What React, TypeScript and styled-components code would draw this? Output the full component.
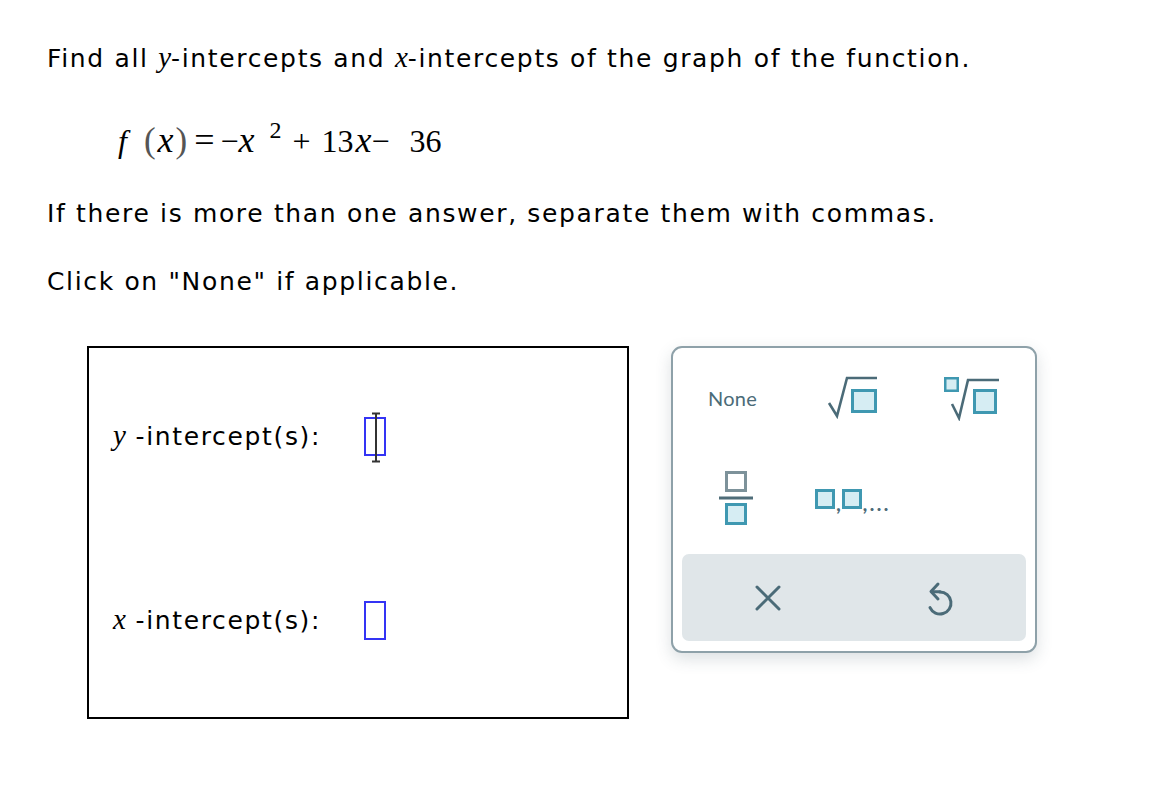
import React from "react";
import styled, { createGlobalStyle } from "styled-components";

const Global = createGlobalStyle`
  html, body { margin: 0; padding: 0; background: #fff; }
  body { font-family: "DejaVu Sans", Verdana, sans-serif; color: #000; }
`;

const Page = styled.div`
  padding: 43px 0 0 47px;
  width: 1166px;
  height: 792px;
  box-sizing: border-box;
`;

const Para = styled.p<{ $mt?: number }>`
  margin: ${(p) => p.$mt ?? 0}px 0 0 0;
  font-size: 25px;
  line-height: 28px;
  letter-spacing: 1.65px;
  white-space: nowrap;
`;

const Var = styled.span<{ $size?: number }>`
  font-family: "Liberation Serif", "Times New Roman", serif;
  font-style: italic;
  font-size: ${(p) => p.$size ?? 29}px;
  letter-spacing: 0;
`;

const MathLine = styled.div`
  margin: 47px 0 0 71px;
  height: 40px;
  display: flex;
  align-items: baseline;
  font-family: "Liberation Serif", "Times New Roman", serif;
  font-size: 32px;
  line-height: 40px;
`;

const Sym = styled.span<{ $ml?: number; $it?: boolean; $size?: number; $color?: string; $raise?: number }>`
  margin-left: ${(p) => p.$ml ?? 0}px;
  font-style: ${(p) => (p.$it ? "italic" : "normal")};
  font-size: ${(p) => p.$size ?? 32}px;
  color: ${(p) => p.$color ?? "#000"};
  position: relative;
  top: ${(p) => -(p.$raise ?? 0)}px;
`;

const AnswerArea = styled.div`
  margin: 50px 0 0 40px;
  display: flex;
  align-items: flex-start;
  gap: 42px;
`;

const AnswerBox = styled.div`
  width: 542px;
  height: 373px;
  box-sizing: border-box;
  border: 2px solid #000;
  padding: 68px 0 0 24px;
  display: grid;
  grid-template-columns: 251px auto;
  grid-template-rows: 40px 40px;
  row-gap: 144px;
  align-items: center;
  justify-items: start;
`;

const Label = styled.div`
  font-size: 25px;
  line-height: 28px;
  letter-spacing: 1.65px;
  white-space: nowrap;
`;

const InputSlot = styled.div`
  position: relative;
  width: 22px;
  height: 39px;
  box-sizing: border-box;
  border: 2px solid #3434f4;
`;

const Cursor = styled.svg`
  position: absolute;
  left: 3px;
  top: -7px;
`;

const Keypad = styled.div`
  width: 366px;
  height: 307px;
  box-sizing: border-box;
  border: 2px solid #8ea1a9;
  border-radius: 11px;
  box-shadow: 0 6px 16px rgba(60, 85, 95, 0.18);
  background: #fff;
  padding: 0 9px 10px 0;
  display: flex;
  flex-direction: column;
`;

const KeyGrid = styled.div`
  display: grid;
  grid-template-columns: repeat(3, 119px);
  grid-template-rows: 100px 100px;
`;

const Key = styled.div`
  display: flex;
  align-items: center;
  justify-content: center;
  color: #4b6b78;
`;

const NoneText = styled.span`
  font-family: Lato, "Open Sans", sans-serif;
  font-size: 20px;
  color: #4b6b78;
  letter-spacing: 0.2px;
`;

const ListIcon = styled.div`
  display: flex;
  align-items: flex-end;
  font-family: Lato, "Open Sans", sans-serif;
  font-weight: 900;
  font-size: 19px;
  line-height: 17px;
  color: #4b6b78;
  margin-left: 4px;
  margin-top: 2px;
`;

const Slot = styled.span`
  display: inline-block;
  width: 20px;
  height: 20px;
  box-sizing: border-box;
  border: 3px solid #3f98b1;
  background: #d6edf3;
`;

const Punct = styled.span<{ $spacing?: number }>`
  margin: 0 1px 0 1px;
  letter-spacing: ${(p) => p.$spacing ?? 0}px;
  position: relative;
  top: 3px;
`;

const ActionBar = styled.div`
  margin: 6px 0 0 9px;
  height: 87px;
  border-radius: 7px;
  background: #e0e6e9;
  display: grid;
  grid-template-columns: 1fr 1fr;
  align-items: center;
  justify-items: center;
`;

const STROKE = "#4b6b78";
const TEAL = "#3f98b1";
const FILL = "#d6edf3";

const SqrtIcon = () => (
  <svg width="53" height="44" viewBox="0 0 53 44" style={{ marginLeft: 2, marginTop: -2 }}>
    <path d="M3 28 L11 41 L21 3 H51" fill="none" stroke={STROKE} strokeWidth="2.6" strokeLinejoin="miter" />
    <rect x="26.5" y="15.5" width="23" height="21" fill={FILL} stroke={TEAL} strokeWidth="3" />
  </svg>
);

const NthRootIcon = () => (
  <svg width="60" height="46" viewBox="0 0 60 46" style={{ marginLeft: 2, marginTop: 0 }}>
    <rect x="3.25" y="3.25" width="12.5" height="12.5" fill={FILL} stroke={TEAL} strokeWidth="2.5" />
    <path d="M10 29 L17 43 L26 5 H57" fill="none" stroke={STROKE} strokeWidth="2.6" />
    <rect x="32.5" y="15.5" width="21" height="22" fill={FILL} stroke={TEAL} strokeWidth="3" />
  </svg>
);

const FracIcon = () => (
  <svg width="40" height="58" viewBox="0 0 40 58" style={{ marginLeft: 8 }}>
    <rect x="9.5" y="3.5" width="19" height="18" fill="#fff" stroke="#7d929a" strokeWidth="3" />
    <line x1="2" y1="29" x2="36" y2="29" stroke="#4f6d79" strokeWidth="3" />
    <rect x="9.5" y="35.5" width="19" height="19" fill={FILL} stroke={TEAL} strokeWidth="3" />
  </svg>
);

const CloseIcon = () => (
  <svg width="26" height="26" viewBox="0 0 26 26">
    <path d="M2 2 L24 24 M24 2 L2 24" stroke={STROKE} strokeWidth="3" strokeLinecap="round" />
  </svg>
);

const ResetIcon = () => (
  <svg width="32" height="38" viewBox="0 0 32 38" style={{ marginTop: 2 }}>
    <path
      d="M16 12 A11 11 0 1 1 6 27.6"
      fill="none"
      stroke={STROKE}
      strokeWidth="3"
      strokeLinecap="round"
    />
    <path d="M14 4 L7 11.5 L14 19" fill="none" stroke={STROKE} strokeWidth="3" strokeLinecap="round" strokeLinejoin="round" />
    <path d="M8 11.8 H16" stroke={STROKE} strokeWidth="3" strokeLinecap="round" />
  </svg>
);

export default function App() {
  return (
    <>
      <Global />
      <Page>
        <Para>
          Find all <Var>y</Var>-intercepts and <Var>x</Var>-intercepts of the graph of the function.
        </Para>
        <MathLine>
          <Sym $it>f</Sym>
          <Sym $ml={17} $size={35} $color="#555">(</Sym>
          <Sym $it $ml={2} $size={36}>x</Sym>
          <Sym $ml={2} $size={35} $color="#555">)</Sym>
          <Sym $ml={7} $size={36}>=</Sym>
          <Sym $ml={6}>−</Sym>
          <Sym $it $ml={0} $size={36}>x</Sym>
          <Sym $ml={15} $size={24} $raise={14}>2</Sym>
          <Sym $ml={11}>+</Sym>
          <Sym $ml={11}>13</Sym>
          <Sym $it $ml={2} $size={36}>x</Sym>
          <Sym $ml={0}>−</Sym>
          <Sym $ml={20}>36</Sym>
        </MathLine>
        <Para $mt={40}>If there is more than one answer, separate them with commas.</Para>
        <Para $mt={40}>Click on "None" if applicable.</Para>
        <AnswerArea>
          <AnswerBox>
            <Label>
              <Var>y</Var> -intercept(s):
            </Label>
            <InputSlot>
              <Cursor width="14" height="51" viewBox="0 0 14 51">
                <path d="M3 1.5 H11 M7 1.5 V49.5 M3 49.5 H11" stroke="#333" strokeWidth="2" fill="none" />
              </Cursor>
            </InputSlot>
            <Label>
              <Var>x</Var> -intercept(s):
            </Label>
            <InputSlot />
          </AnswerBox>
          <Keypad>
            <KeyGrid>
              <Key>
                <NoneText>None</NoneText>
              </Key>
              <Key>
                <SqrtIcon />
              </Key>
              <Key>
                <NthRootIcon />
              </Key>
              <Key>
                <FracIcon />
              </Key>
              <Key>
                <ListIcon>
                  <Slot />
                  <Punct>,</Punct>
                  <Slot />
                  <Punct $spacing={2.5}>,...</Punct>
                </ListIcon>
              </Key>
              <Key />
            </KeyGrid>
            <ActionBar>
              <CloseIcon />
              <ResetIcon />
            </ActionBar>
          </Keypad>
        </AnswerArea>
      </Page>
    </>
  );
}
